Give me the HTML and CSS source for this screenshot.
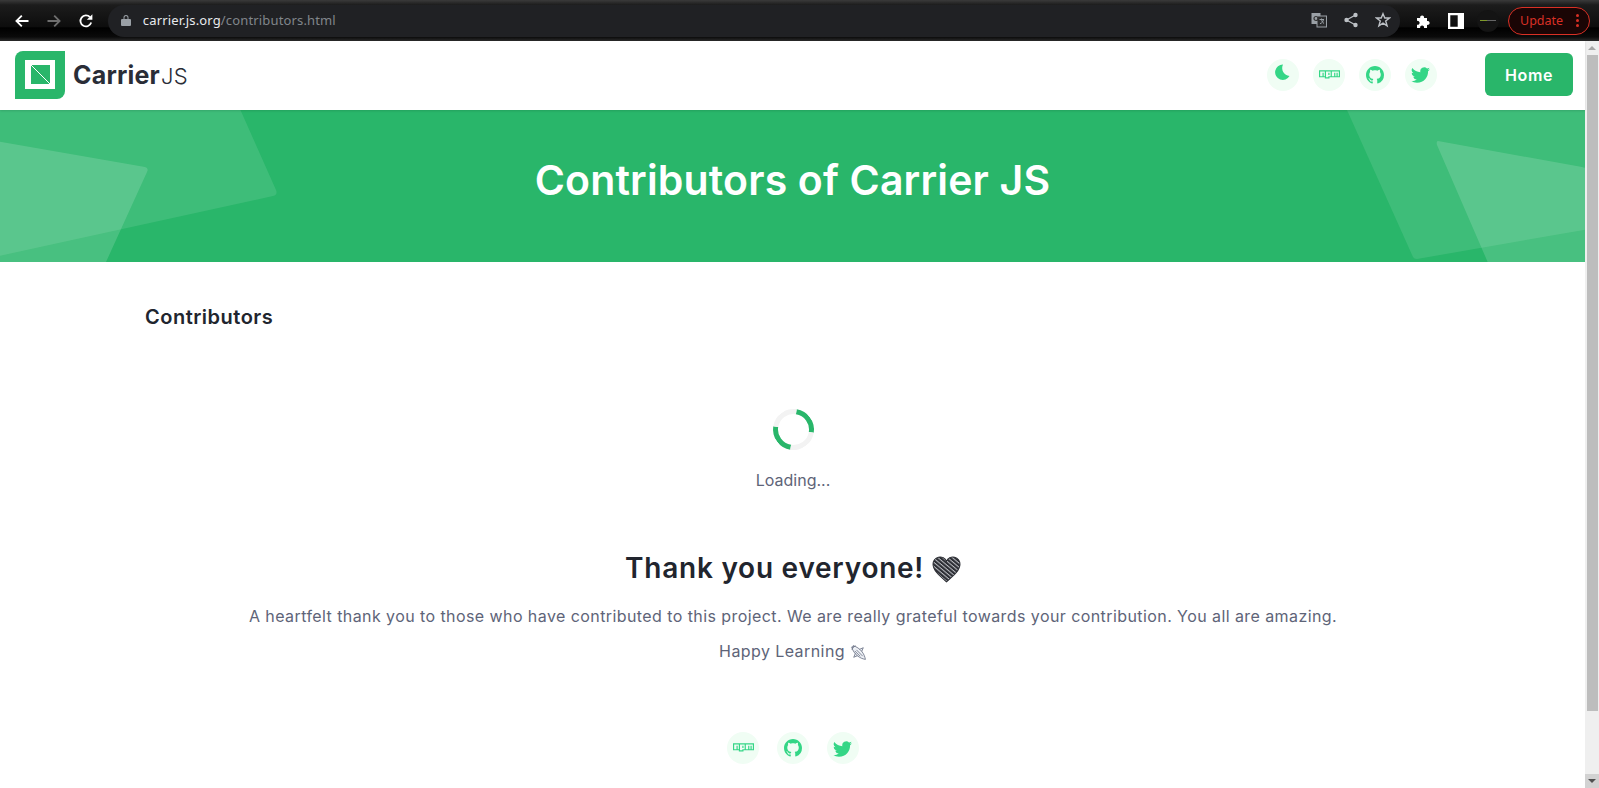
FILE: index.html
```html
<!DOCTYPE html>
<html lang="en">
<head>
    <meta charset="UTF-8">
    <meta name="viewport" content="width=device-width, initial-scale=1.0">
    <title>Contributors of Carrier JS</title>
    <link rel="stylesheet" href="styles.css">
</head>
<body>
<svg class="defs" width="0" height="0">
    <symbol id="i-moon" viewBox="0 0 16 16"><path d="M9 .5A7.700 7.700 0 1 0 15.500 12 8 8 0 0 1 9 .5z"/></symbol>
    <symbol id="i-npm" viewBox="0 0 576 256"><path fill-rule="evenodd" d="M288 128h-32V64h32v64zM576 0v192H288v32H160v-32H0V0h576zM160 32H32v128h64V64h32v96h32V32zm160 0H192v160h64v-32h64V32zm224 0H352v128h64V64h32v96h32V64h32v96h32V32z"/></symbol>
    <symbol id="i-github" viewBox="0 0 16 16"><path d="M8 0C3.58 0 0 3.58 0 8c0 3.54 2.29 6.53 5.47 7.59.4.07.55-.17.55-.38 0-.19-.01-.82-.01-1.49-2.01.37-2.53-.49-2.69-.94-.09-.23-.48-.94-.82-1.13-.28-.15-.68-.52-.01-.53.63-.01 1.08.58 1.23.82.72 1.21 1.87.87 2.33.66.07-.52.28-.87.51-1.07-1.78-.2-3.64-.89-3.64-3.95 0-.87.31-1.59.82-2.15-.08-.2-.36-1.02.08-2.12 0 0 .67-.21 2.2.82.64-.18 1.32-.27 2-.27.68 0 1.36.09 2 .27 1.53-1.04 2.2-.82 2.2-.82.44 1.1.16 1.92.08 2.12.51.56.82 1.27.82 2.15 0 3.07-1.87 3.75-3.65 3.95.29.25.54.73.54 1.48 0 1.07-.01 1.93-.01 2.2 0 .21.15.46.55.38A8.013 8.013 0 0016 8c0-4.42-3.58-8-8-8z"/></symbol>
    <symbol id="i-twitter" viewBox="0 0 16 16"><path d="M5.026 15c6.038 0 9.341-5.003 9.341-9.334 0-.14 0-.282-.006-.422A6.685 6.685 0 0 0 16 3.542a6.658 6.658 0 0 1-1.889.518 3.301 3.301 0 0 0 1.447-1.817 6.533 6.533 0 0 1-2.087.793A3.286 3.286 0 0 0 7.875 6.03a9.325 9.325 0 0 1-6.767-3.429 3.289 3.289 0 0 0 1.018 4.382A3.323 3.323 0 0 1 .64 6.575v.045a3.288 3.288 0 0 0 2.632 3.218 3.203 3.203 0 0 1-.865.115 3.23 3.23 0 0 1-.614-.057 3.283 3.283 0 0 0 3.067 2.277A6.588 6.588 0 0 1 .78 13.58a6.32 6.32 0 0 1-.78-.045A9.344 9.344 0 0 0 5.026 15z"/></symbol>
</svg>

<!-- browser toolbar -->
<div class="toolbar">
    <div class="tb-nav">
        <svg class="tb-icon" viewBox="0 0 16 16"><path d="M14.500 8H2.500M7.800 2.600 2.400 8l5.400 5.400" fill="none" stroke="#fff" stroke-width="1.800"/></svg>
        <svg class="tb-icon" viewBox="0 0 16 16"><path d="M1.500 8h12M8.200 2.600 13.600 8l-5.400 5.400" fill="none" stroke="#6e6e6e" stroke-width="1.800"/></svg>
        <svg class="tb-icon" viewBox="0 0 16 16"><path d="M13.200 9.600A5.500 5.500 0 1 1 12 4.200" fill="none" stroke="#fff" stroke-width="1.800"/><path d="M14.400 1.200v5.600H8.800z" fill="#fff"/></svg>
    </div>
    <div class="omnibox">
        <svg class="lock" viewBox="0 0 10 12"><path d="M2.500 5V3.400a2.500 2.500 0 0 1 5 0V5H9a1 1 0 0 1 1 1v5a1 1 0 0 1-1 1H1a1 1 0 0 1-1-1V6a1 1 0 0 1 1-1zm1 0h3V3.400a1.500 1.500 0 0 0-3 0z" fill="#9aa0a6"/></svg>
        <span class="url">carrier.js.org<span class="url-path">/contributors.html</span></span>
        <div class="omni-actions">
            <svg class="tb-icon" viewBox="0 0 16 16"><rect x="0.500" y="1" width="9" height="11" fill="#9aa0a6"/><rect x="6" y="4" width="9.500" height="11" fill="#2a2b2d" stroke="#9aa0a6"/><circle cx="5" cy="6.500" r="2" fill="none" stroke="#333" stroke-width="1.200"/><path d="M8.500 7.500h4.500M10.500 6.500c0 2.500 1 4 2.500 5M12.500 7.500c-.3 2-1.500 3.500-3.500 4.300" fill="none" stroke="#9aa0a6"/></svg>
            <svg class="tb-icon" viewBox="0 0 16 16"><path d="M12.500 3 3.500 8l9 5" fill="none" stroke="#bdc1c6" stroke-width="1.300"/><circle cx="12.500" cy="3" r="2.200" fill="#bdc1c6"/><circle cx="3.500" cy="8" r="2.200" fill="#bdc1c6"/><circle cx="12.500" cy="13" r="2.200" fill="#bdc1c6"/></svg>
            <svg class="tb-icon" viewBox="0 0 16 16"><path d="M8 1.700 9.800 6h4.700l-3.800 3 1.400 4.800L8 11.100l-4.100 2.700L5.300 9 1.500 6h4.700z" fill="none" stroke="#bdc1c6" stroke-width="1.400"/></svg>
        </div>
    </div>
    <div class="tb-right">
        <svg class="tb-icon" viewBox="0 0 16 16"><path d="M1 5h3.200a2 2 0 1 1 3.800 0H11v3a2 2 0 1 1 0 3.800V15H8a2 2 0 1 0-3.800 0H1v-3.300a2 2 0 1 0 0-3.800z" fill="#fff"/></svg>
        <svg class="tb-icon" viewBox="0 0 14 14"><path fill-rule="evenodd" d="M0 0h14v14H0zM2 2v10h6.500V2z" fill="#fff"/></svg>
        <div class="avatar"><span class="avatar-mark"></span></div>
        <div class="update-pill">Update<span class="dots"><i></i><i></i><i></i></span></div>
    </div>
</div>

<div class="window">
    <div class="page">
        <header class="navbar">
            <a class="brand" href="#">
                <span class="logo"><span class="logo-ring"><span class="logo-core"></span></span></span>
                <span class="brand-name">Carrier<span class="brand-js">JS</span></span>
            </a>
            <div class="nav-right">
                <div class="socials">
                    <a class="round-icon"><svg class="ic-moon"><use href="#i-moon"/></svg></a>
                    <a class="round-icon"><svg class="ic-npm"><use href="#i-npm"/></svg></a>
                    <a class="round-icon"><svg class="ic-gh"><use href="#i-github"/></svg></a>
                    <a class="round-icon"><svg class="ic-tw"><use href="#i-twitter"/></svg></a>
                </div>
                <a class="home-btn" href="#">Home</a>
            </div>
        </header>

        <section class="hero">
            <svg class="hero-shapes" viewBox="0 0 1585 152" preserveAspectRatio="none">
                <path class="shape-a" d="M-10 -10H236L276 80Q278 85 273 86L-10 148Z"/>
                <path class="shape-b" d="M-10 30L145 57Q149 58 147 62L106 152H-10Z"/>
                <path class="shape-a" d="M1347 0H1595V118L1417 149Q1414 149 1413 147Z"/>
                <path class="shape-b" d="M1438 31L1582 57Q1585 58 1595 60V162H1492L1437 35Q1436 31 1438 31Z"/>
            </svg>
            <h1 class="hero-title">Contributors of Carrier JS</h1>
        </section>

        <main class="content">
            <h2 class="section-title">Contributors</h2>
            <div class="loader">
                <div class="spinner"></div>
                <p class="loader-text">Loading...</p>
            </div>
            <div class="thanks">
                <h2 class="thanks-title">Thank you everyone!
                    <svg class="heart" viewBox="0 0 28 26">
                        <defs>
                            <pattern id="hatch" width="3" height="3" patternUnits="userSpaceOnUse" patternTransform="rotate(40)">
                                <rect width="3" height="3" fill="#2b2d33"/>
                                <rect width="3" height="1" fill="#b9bbc0"/>
                            </pattern>
                        </defs>
                        <path d="M14 25C6 18 1 13.500 1 8a6.800 6.800 0 0 1 13-3 6.800 6.800 0 0 1 13 3c0 5.500-5 10-13 17z" fill="url(#hatch)" stroke="#2b2d33"/>
                    </svg>
                </h2>
                <p class="thanks-text">A heartfelt thank you to those who have contributed to this project. We are really grateful towards your contribution. You all are amazing.</p>
                <p class="thanks-text">Happy Learning
                    <svg class="rocket" viewBox="0 0 16 16"><path d="M14.500 14.500C13.500 9 10 4 3 1.500L1.500 3C4 10 9 13.500 14.500 14.500zM3.500 2 1.800 5.500M2 3.500l3.500-1.800M5 9l-1.500 3.500L7 11M9 5l3.500-1.500L11 7M6 5.500l6 6M4.500 6.500l5 5" fill="#eef1f6" stroke="#6d7486" stroke-width=".8"/></svg>
                </p>
            </div>
            <div class="footer-socials">
                <a class="round-icon"><svg class="ic-npm"><use href="#i-npm"/></svg></a>
                <a class="round-icon"><svg class="ic-gh"><use href="#i-github"/></svg></a>
                <a class="round-icon"><svg class="ic-tw"><use href="#i-twitter"/></svg></a>
            </div>
        </main>
    </div>
    <div class="scrollbar">
        <div class="sb-btn"><span class="arrow-up"></span></div>
        <div class="sb-track"><div class="sb-thumb"></div></div>
        <div class="sb-btn sb-btn-down"><span class="arrow-down"></span></div>
    </div>
</div>
</body>
</html>
```

FILE: styles.css
```css
* {
    box-sizing: border-box;
}
html, body {
    margin: 0;
    height: 788px;
    overflow: hidden;
}
body {
    font-family: Inter, "Open Sans", sans-serif;
    background: #fff;
    color: #21252e;
    display: flex;
    flex-direction: column;
}
a {
    text-decoration: none;
    color: inherit;
}
h1, h2, p {
    margin: 0;
}
.defs {
    position: absolute;
}

/* toolbar */
.toolbar {
    height: 41px;
    flex: none;
    display: flex;
    align-items: center;
    background: linear-gradient(#3a3a3a 0, #1c1c1c 12%, #0d0d0d 65%, #000 68%, #0a0a0a 90%, #2b2b2b 100%);
    padding: 0 9px 0 14px;
}
.tb-nav {
    display: flex;
    gap: 16px;
    width: 94px;
}
.tb-icon {
    width: 16px;
    height: 16px;
    display: block;
}
.omnibox {
    width: 1294px;
    height: 32px;
    background: #202124;
    border-radius: 16px;
    display: flex;
    align-items: center;
    padding: 0 9px 2px 13px;
    font-family: "Noto Sans", sans-serif;
    font-size: 13px;
}
.lock {
    width: 10px;
    height: 12px;
    margin-right: 12px;
}
.url {
    color: #e8eaed;
    letter-spacing: .15px;
}
.url-path {
    color: #80868b;
}
.omni-actions {
    margin-left: auto;
    display: flex;
    gap: 16px;
}
.tb-right {
    display: flex;
    align-items: center;
    margin-left: 16px;
    gap: 16px;
}
.avatar {
    width: 22px;
    height: 22px;
    border-radius: 50%;
    background: #141414;
    display: flex;
    align-items: center;
    justify-content: center;
    margin-left: -3px;
}
.avatar-mark {
    width: 16px;
    height: 1px;
    background: linear-gradient(90deg, #7f9a2c 45%, #666 45%);
}
.update-pill {
    width: 82px;
    height: 28px;
    margin-left: -7px;
    border: 1px solid #d93025;
    border-radius: 14px;
    background: #1a0505;
    color: #d93025;
    font-family: "Noto Sans", sans-serif;
    font-size: 12.5px;
    display: flex;
    align-items: center;
    padding-left: 11px;
}
.dots {
    margin-left: auto;
    margin-right: 10px;
    display: flex;
    flex-direction: column;
    gap: 2px;
}
.dots i {
    width: 3px;
    height: 3px;
    border-radius: 50%;
    background: #d93025;
}

/* page */
.window {
    flex: 1;
    display: flex;
    min-height: 0;
}
.page {
    flex: 1;
    min-width: 0;
}
.navbar {
    position: relative;
    height: 69px;
    display: flex;
    align-items: center;
    justify-content: space-between;
    padding: 0 12px 2px 15px;
    background: #fff;
    box-shadow: 0 1px 2px rgba(0, 0, 0, .12);
    z-index: 1;
}
.brand {
    display: flex;
    align-items: center;
    gap: 8px;
}
.logo {
    width: 50px;
    height: 48px;
    background: #29b66a;
    border-radius: 8px 0 8px 0;
    display: flex;
    align-items: center;
    justify-content: center;
}
.logo-ring {
    width: 30px;
    height: 29px;
    background: #fff;
    display: flex;
    align-items: center;
    justify-content: center;
}
.logo-core {
    width: 19px;
    height: 19px;
    background: linear-gradient(45deg, #29b66a 48%, #fff 48%, #fff 52%, #29b66a 52%);
}
.brand-name {
    font-size: 25px;
    font-weight: 700;
    color: #2a2d37;
    letter-spacing: .2px;
}
.brand-js {
    font-weight: 300;
    font-size: 22px;
    margin-left: 1px;
}
.nav-right {
    display: flex;
    align-items: center;
    gap: 48px;
}
.socials, .footer-socials {
    display: flex;
    gap: 14px;
}
.round-icon {
    width: 32px;
    height: 32px;
    border-radius: 50%;
    background: #f0fdf4;
    display: flex;
    align-items: center;
    justify-content: center;
    fill: #34d686;
}
.ic-moon {
    width: 16px;
    height: 16px;
    margin: -6px 0 0 -2px;
}
.ic-npm {
    width: 21px;
    height: 10px;
}
.ic-gh {
    width: 18px;
    height: 18px;
}
.ic-tw {
    width: 19px;
    height: 19px;
    margin-left: -1px;
}
.home-btn {
    width: 88px;
    height: 43px;
    background: #29b66a;
    color: #fff;
    border-radius: 6px;
    font-size: 16px;
    font-weight: 600;
    letter-spacing: .6px;
    display: flex;
    align-items: center;
    justify-content: center;
}
.hero {
    position: relative;
    height: 152px;
    padding-bottom: 12px;
    background: #29b66a;
    display: flex;
    align-items: center;
    justify-content: center;
    overflow: hidden;
}
.hero-shapes {
    position: absolute;
    inset: 0;
    width: 100%;
    height: 100%;
}
.shape-a {
    fill: #fff;
    fill-opacity: .1;
}
.shape-b {
    fill: #fff;
    fill-opacity: .15;
}
.hero-title {
    position: relative;
    color: #fff;
    font-size: 41px;
    font-weight: 600;
    letter-spacing: .16px;
}
.content {
    padding: 42px 144px 0 145px;
}
.section-title {
    font-size: 20px;
    font-weight: 600;
    line-height: 26px;
    letter-spacing: .5px;
}
.loader {
    margin-top: 79px;
    display: flex;
    flex-direction: column;
    align-items: center;
}
.spinner {
    width: 41px;
    height: 41px;
    border-radius: 50%;
    border: 5px solid #f3f3f3;
    border-top-color: #29b66a;
    border-bottom-color: #29b66a;
    transform: rotate(54deg);
}
.loader-text {
    margin-top: 18px;
    font-size: 16px;
    color: #5e6478;
    line-height: 24px;
}
.thanks {
    margin-top: 57px;
    text-align: center;
}
.thanks-title {
    font-size: 28px;
    font-weight: 600;
    line-height: 38px;
    margin-bottom: 17px;
    letter-spacing: .75px;
}
.heart {
    width: 29px;
    height: 27px;
    vertical-align: -5px;
}
.thanks-text {
    font-size: 16px;
    line-height: 24px;
    color: #5e6478;
    margin-bottom: 11px;
    letter-spacing: .42px;
}
.rocket {
    width: 17px;
    height: 17px;
    vertical-align: -4px;
}
.footer-socials {
    margin-top: 69px;
    justify-content: center;
    gap: 18px;
}

/* scrollbar */
.scrollbar {
    width: 14px;
    flex: none;
    background: #efefef;
    display: flex;
    flex-direction: column;
}
.sb-btn {
    height: 14px;
    display: flex;
    align-items: center;
    justify-content: center;
}
.sb-btn-down {
    background: #d2d2d2;
}
.sb-track {
    flex: 1;
}
.sb-thumb {
    margin: 0 1px 0 2px;
    height: 656px;
    background: #bdbdbd;
}
.arrow-up, .arrow-down {
    width: 0;
    height: 0;
    border-left: 4px solid transparent;
    border-right: 4px solid transparent;
}
.arrow-up {
    border-bottom: 4px solid #a6a6a6;
}
.arrow-down {
    border-top: 4px solid #505050;
}
```
